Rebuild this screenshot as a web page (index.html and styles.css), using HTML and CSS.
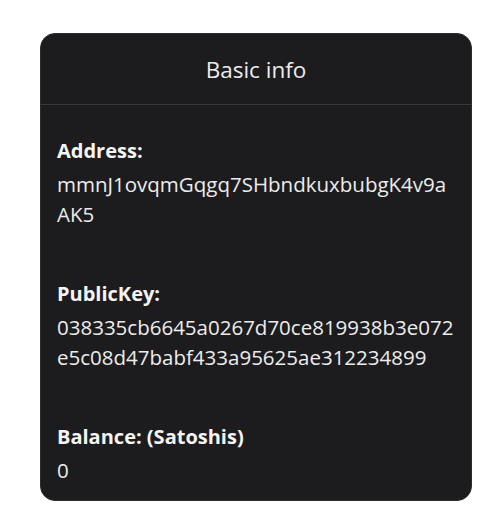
FILE: index.html
```html
<!DOCTYPE html>
<html lang="en">
<head>
<meta charset="utf-8">
<title>Basic info</title>
<link rel="stylesheet" href="styles.css">
</head>
<body>
  <section class="card">
    <header class="card-header">Basic info</header>
    <div class="card-body">
      <div class="field">
        <div class="label">Address:</div>
        <div class="value">mmnJ1ovqmGqgq7SHbndkuxbubgK4v9aAK5</div>
      </div>
      <div class="field">
        <div class="label">PublicKey:</div>
        <div class="value">038335cb6645a0267d70ce819938b3e072e5c08d47babf433a95625ae312234899</div>
      </div>
      <div class="field">
        <div class="label">Balance: (Satoshis)</div>
        <div class="value">0</div>
      </div>
    </div>
  </section>
</body>
</html>
```

FILE: styles.css
```css
html, body {
  margin: 0;
  padding: 0;
  background: #ffffff;
}

body {
  font-family: "Open Sans", "Noto Sans", sans-serif;
  padding: 33px 0 0 40px;
}

.card {
  width: 432px;
  height: 468px;
  box-sizing: border-box;
  background: #1c1c1e;
  border: 1px solid #2c2c2e;
  border-radius: 15px;
  color: #ececec;
  display: flex;
  flex-direction: column;
}

.card-header {
  height: 70px;
  display: flex;
  align-items: center;
  justify-content: center;
  font-size: 22.5px;
  color: #ececec;
  border-bottom: 1px solid #3a3a3c;
}

.card-body {
  padding: 31px 14px 0 16px;
  display: flex;
  flex-direction: column;
  gap: 50px;
}

.field {
  display: flex;
  flex-direction: column;
}

.label {
  font-size: 20px;
  line-height: 30px;
  font-weight: 700;
  color: #f4f4f4;
  margin-bottom: 3px;
}

.value {
  font-size: 20.5px;
  line-height: 30px;
  color: #ececec;
  word-break: break-all;
}
```
